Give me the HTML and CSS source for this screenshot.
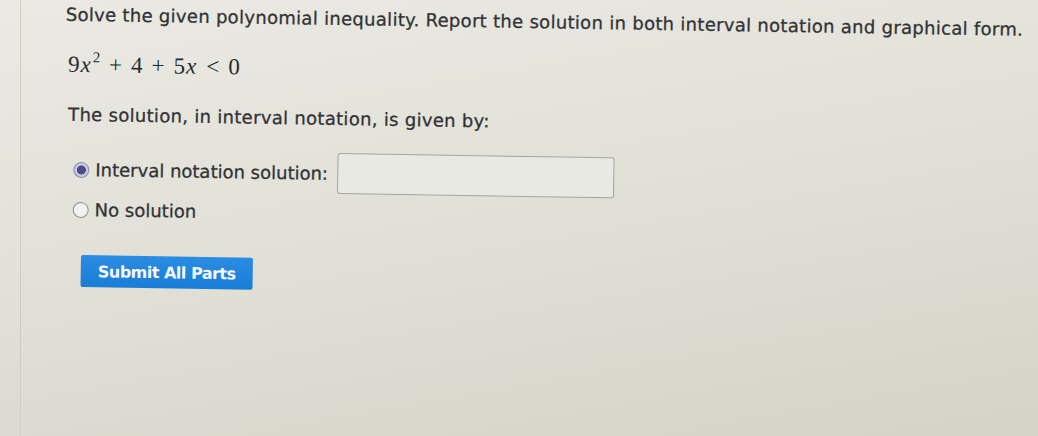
FILE: index.html
```html
<!DOCTYPE html>
<html>
<head>
<meta charset="utf-8">
<link rel="stylesheet" href="styles.css">
</head>
<body>
<div class="page">
  <div class="content">
    <p class="prompt">Solve the given polynomial inequality. Report the solution in both interval notation and graphical form.</p>
    <p class="math">9<i>x</i><sup>2</sup><span class="op">+</span>4<span class="op">+</span>5<i>x</i><span class="op">&lt;</span>0</p>
    <p class="lead">The solution, in interval notation, is given by:</p>
    <div class="options">
      <label class="option">
        <span class="radio checked"></span>
        <span class="opt-text">Interval notation solution:</span>
        <span class="field"></span>
      </label>
      <label class="option">
        <span class="radio"></span>
        <span class="opt-text">No solution</span>
      </label>
    </div>
    <button class="submit">Submit All Parts</button>
  </div>
</div>
</body>
</html>
```
FILE: styles.css
```css
html, body {
  margin: 0;
  padding: 0;
  width: 1038px;
  height: 436px;
  overflow: hidden;
}
body {
  background: linear-gradient(170deg, #eaeae3 0%, #e2e1d8 45%, #d5d3c7 100%);
  font-family: "DejaVu Sans", Verdana, sans-serif;
  color: #323336;
}
.page {
  height: 436px;
  border-left: 1px solid #d0cec3;
  margin-left: 20px;
  box-sizing: border-box;
}
.content {
  padding: 3px 0 0 45px;
  transform: rotate(0.9deg);
  transform-origin: 0 0;
}
.prompt, .lead, .option {
  -webkit-text-stroke: 0.3px currentColor;
}
.prompt {
  margin: 0;
  font-size: 18px;
  line-height: 22px;
  letter-spacing: 0.3px;
  white-space: nowrap;
}
.math {
  margin: 25px 0 0 3px;
  font-family: "Liberation Serif", "DejaVu Serif", serif;
  font-size: 23px;
  line-height: 28px;
  color: #2a2b2d;
}
.math i { font-style: italic; padding: 0 1px; }
.math sup { font-size: 15px; line-height: 0; vertical-align: 10px; margin-left: 1px; }
.math .op { margin: 0 9px; }
.lead {
  margin: 25px 0 0 4px;
  font-size: 18px;
  line-height: 22px;
  letter-spacing: 0.3px;
}
.options {
  margin: 23px 0 0 10px;
  display: flex;
  flex-direction: column;
  gap: 9px;
}
.option {
  display: flex;
  align-items: center;
  font-size: 18px;
  line-height: 22px;
}
.radio {
  width: 16px;
  height: 16px;
  border: 1.5px solid #8c8d91;
  border-radius: 50%;
  box-sizing: border-box;
  background: #f2f2ee;
  margin-right: 6px;
  flex: none;
}
.radio.checked {
  border-color: #8a8bb0;
  background: radial-gradient(circle, #4a4c8c 0 4.2px, #c9c9dc 4.8px);
}
.field {
  width: 277px;
  height: 41px;
  margin-left: 9px;
  border: 1.5px solid #a6a6a1;
  border-radius: 3px;
  background: #e9e9e3;
  box-sizing: border-box;
}
.submit {
  display: block;
  margin: 34px 0 0 19px;
  width: 172px;
  height: 32px;
  padding: 0;
  background: linear-gradient(#2a8ce2, #1a7dd6);
  color: #f4f8ff;
  border: none;
  border-radius: 2px;
  font-family: "DejaVu Sans", sans-serif;
  font-weight: bold;
  font-size: 16px;
  letter-spacing: -0.5px;
}
```
